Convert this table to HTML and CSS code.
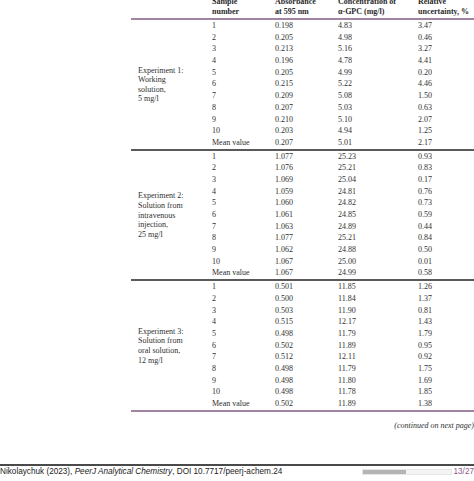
FILE: index.html
```html
<!DOCTYPE html>
<html lang="en">
<head>
<meta charset="utf-8">
<title>Table – Nikolaychuk (2023)</title>
<link rel="stylesheet" href="styles.css">
</head>
<body>
<div class="page">
  <div class="tbl">
    <div class="head">
      <div></div>
      <div>Sample<br>number</div>
      <div>Absorbance<br>at 595 nm</div>
      <div>Concentration of<br>α-GPC (mg/l)</div>
      <div>Relative<br>uncertainty, %</div>
    </div>

    <div class="group">
      <div class="label">Experiment 1:<br>Working<br>solution,<br>5 mg/l</div>
      <div>1</div><div>0.198</div><div>4.83</div><div>3.47</div>
      <div>2</div><div>0.205</div><div>4.98</div><div>0.46</div>
      <div>3</div><div>0.213</div><div>5.16</div><div>3.27</div>
      <div>4</div><div>0.196</div><div>4.78</div><div>4.41</div>
      <div>5</div><div>0.205</div><div>4.99</div><div>0.20</div>
      <div>6</div><div>0.215</div><div>5.22</div><div>4.46</div>
      <div>7</div><div>0.209</div><div>5.08</div><div>1.50</div>
      <div>8</div><div>0.207</div><div>5.03</div><div>0.63</div>
      <div>9</div><div>0.210</div><div>5.10</div><div>2.07</div>
      <div>10</div><div>0.203</div><div>4.94</div><div>1.25</div>
      <div>Mean value</div><div>0.207</div><div>5.01</div><div>2.17</div>
    </div>

    <div class="group">
      <div class="label">Experiment 2:<br>Solution from<br>intravenous<br>injection,<br>25 mg/l</div>
      <div>1</div><div>1.077</div><div>25.23</div><div>0.93</div>
      <div>2</div><div>1.076</div><div>25.21</div><div>0.83</div>
      <div>3</div><div>1.069</div><div>25.04</div><div>0.17</div>
      <div>4</div><div>1.059</div><div>24.81</div><div>0.76</div>
      <div>5</div><div>1.060</div><div>24.82</div><div>0.73</div>
      <div>6</div><div>1.061</div><div>24.85</div><div>0.59</div>
      <div>7</div><div>1.063</div><div>24.89</div><div>0.44</div>
      <div>8</div><div>1.077</div><div>25.21</div><div>0.84</div>
      <div>9</div><div>1.062</div><div>24.88</div><div>0.50</div>
      <div>10</div><div>1.067</div><div>25.00</div><div>0.01</div>
      <div>Mean value</div><div>1.067</div><div>24.99</div><div>0.58</div>
    </div>

    <div class="group last">
      <div class="label">Experiment 3:<br>Solution from<br>oral solution,<br>12 mg/l</div>
      <div>1</div><div>0.501</div><div>11.85</div><div>1.26</div>
      <div>2</div><div>0.500</div><div>11.84</div><div>1.37</div>
      <div>3</div><div>0.503</div><div>11.90</div><div>0.81</div>
      <div>4</div><div>0.515</div><div>12.17</div><div>1.43</div>
      <div>5</div><div>0.498</div><div>11.79</div><div>1.79</div>
      <div>6</div><div>0.502</div><div>11.89</div><div>0.95</div>
      <div>7</div><div>0.512</div><div>12.11</div><div>0.92</div>
      <div>8</div><div>0.498</div><div>11.79</div><div>1.75</div>
      <div>9</div><div>0.498</div><div>11.80</div><div>1.69</div>
      <div>10</div><div>0.498</div><div>11.78</div><div>1.85</div>
      <div>Mean value</div><div>0.502</div><div>11.89</div><div>1.38</div>
    </div>
  </div>

  <p class="cont">(continued on next page)</p>

  <footer class="foot">
    <span class="cite">Nikolaychuk (2023), <i>PeerJ Analytical Chemistry</i>, DOI 10.7717/peerj-achem.24</span>
    <span class="bar"><span class="fill"></span></span>
    <span class="pages">13/27</span>
  </footer>
</div>
</body>
</html>
```

FILE: styles.css
```css
html, body {
  margin: 0;
  padding: 0;
  background: #fff;
  overflow: hidden;
}

.page {
  width: 474px;
  height: 481px;
  overflow: hidden;
  font-family: "Liberation Serif", "Times New Roman", serif;
  color: #2f2f2f;
}

.tbl {
  margin: -3px 0 0 131px;
  width: 360px;
  font-size: 8px;
}

.head,
.group {
  display: grid;
  grid-template-columns: 81px 63px 63px 80px 1fr;
}

.head {
  font-weight: bold;
  line-height: 10px;
  padding-bottom: 1px;
  border-bottom: 2px solid #a284a2;
  color: #2a2a2a;
}

.group {
  grid-auto-rows: 11.7px;
  line-height: 11.7px;
  border-bottom: 2px solid #5a5a5a;
  white-space: nowrap;
}

.group.last {
  border-bottom-color: #a284a2;
}

.label {
  grid-column: 1;
  grid-row: 1 / span 11;
  align-self: center;
  line-height: 9.6px;
  padding-left: 7px;
  padding-top: 1px;
}

.cont {
  margin: 9px 0 0;
  font-size: 8px;
  line-height: 10px;
  font-style: italic;
  text-align: right;
}

.foot {
  margin-top: 33px;
  border-top: 2px solid #4a4a4a;
  display: flex;
  align-items: center;
  padding-top: 1px;
  font-family: "Liberation Sans", Arial, sans-serif;
  font-size: 8.2px;
  line-height: 10px;
  color: #222;
}

.cite {
  flex: 1;
  white-space: nowrap;
}

.bar {
  display: flex;
  width: 88px;
  height: 4px;
  margin-right: 2px;
  background: #f4f4f4;
  border: 1px solid #e6e6e6;
}

.fill {
  width: 43px;
  background: #b4b4b4;
}

.pages {
  color: #8e5a8e;
  white-space: nowrap;
}
```
